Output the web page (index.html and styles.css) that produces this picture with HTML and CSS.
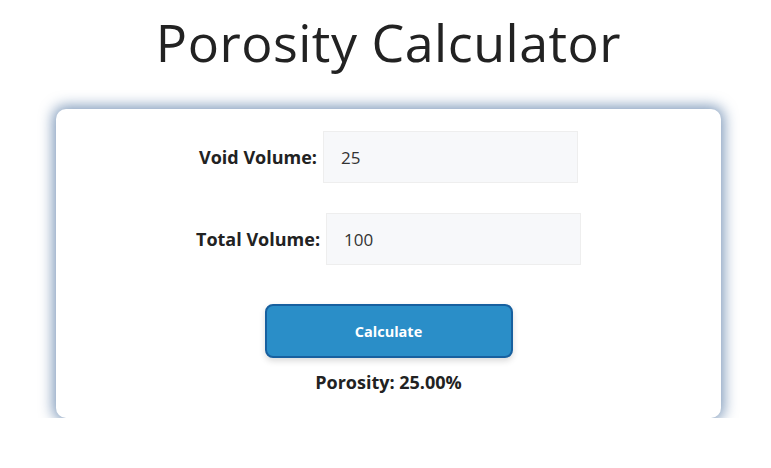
FILE: index.html
```html
<!DOCTYPE html>
<html lang="en">
<head>
<meta charset="utf-8">
<title>Porosity Calculator</title>
<link rel="stylesheet" href="styles.css">
</head>
<body>
<h1 class="title">Porosity Calculator</h1>
<div class="card">
  <div class="row">
    <label class="label" for="void">Void Volume:</label>
    <input class="field" id="void" type="text" value="25">
  </div>
  <div class="row row-last">
    <label class="label" for="total">Total Volume:</label>
    <input class="field" id="total" type="text" value="100">
  </div>
  <button class="btn" type="button">Calculate</button>
  <div class="result">Porosity: 25.00%</div>
</div>
</body>
</html>
```
FILE: styles.css
```css
html, body {
  margin: 0;
  padding: 0;
  background: #ffffff;
}
body {
  font-family: "Open Sans", "Noto Sans", sans-serif;
  color: #222222;
  padding-left: 6px;
  padding-top: 1px;
}
.title {
  margin: 0;
  padding-top: 6px;
  text-align: center;
  font-size: 52px;
  font-weight: 400;
  line-height: 70px;
  letter-spacing: 0.5px;
  color: #222222;
}
.card {
  width: 665px;
  height: 309px;
  box-sizing: border-box;
  margin: 32px auto 0;
  background: #ffffff;
  border-radius: 10px;
  box-shadow: 0 0 14px 3px rgba(40, 85, 140, 0.6);
  padding-top: 22px;
  display: flex;
  flex-direction: column;
  align-items: center;
}
.row {
  display: flex;
  align-items: center;
  gap: 6px;
  margin-bottom: 30px;
}
.row-last {
  margin-bottom: 39px;
}
.label {
  font-weight: 700;
  font-size: 18px;
  color: #222222;
}
.field {
  width: 255px;
  height: 52px;
  box-sizing: border-box;
  border: 1px solid #eeeeee;
  background: #f7f8fa;
  padding: 0 17px;
  font-family: "Open Sans", "Noto Sans", sans-serif;
  font-size: 17px;
  color: #333333;
  outline: none;
}
.btn {
  width: 248px;
  height: 54px;
  box-sizing: border-box;
  border: 2px solid #17609f;
  border-radius: 8px;
  background: #2a8ec8;
  color: #ffffff;
  font-family: "Open Sans", "Noto Sans", sans-serif;
  font-weight: 700;
  font-size: 14.5px;
  box-shadow: 0 3px 6px rgba(0, 0, 0, 0.15);
  cursor: pointer;
}
.result {
  margin-top: 12px;
  font-weight: 700;
  font-size: 18px;
  color: #222222;
}
```
